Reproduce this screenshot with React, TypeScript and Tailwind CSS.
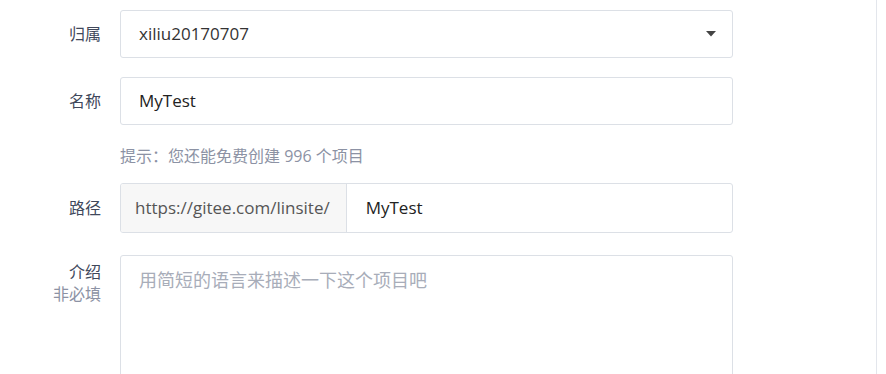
const font = { fontFamily: '"Open Sans", "Noto Sans CJK SC", sans-serif' };

function Label({ children, sub }: { children: string; sub?: string }) {
  return (
    <div className="w-[101px] shrink-0 text-right leading-[22px]">
      <div className="text-[16px] text-[#40485b]">{children}</div>
      {sub && <div className="text-[16px] text-[#8c92a4]">{sub}</div>}
    </div>
  );
}

export default function App() {
  return (
    <div className="h-[374px] w-[886px] overflow-hidden bg-white" style={font}>
      <div className="h-full w-[877px] border-r border-[#e3e6ec] pt-[10px]">
        <div className="flex items-center gap-[19px]">
          <Label>归属</Label>
          <div className="flex h-[48px] w-[613px] items-center justify-between rounded-[3px] border border-[#dce0e6] pl-[18px] pr-[16px]">
            <span className="text-[17px] text-[#333]">xiliu20170707</span>
            <svg width="10" height="6" viewBox="0 0 10 6">
              <path d="M0 0h10L5 5.5z" fill="#444" />
            </svg>
          </div>
        </div>

        <div className="mt-[19px] flex items-center gap-[19px]">
          <Label>名称</Label>
          <div className="flex h-[48px] w-[613px] items-center rounded-[3px] border border-[#dce0e6] pl-[18px]">
            <span className="text-[17px] text-[#222]">MyTest</span>
          </div>
        </div>

        <div className="mt-[20px] pl-[120px] text-[16px] leading-[22px] text-[#8c92a4]">
          提示：您还能免费创建 996 个项目
        </div>

        <div className="mt-[16px] flex items-center gap-[19px]">
          <Label>路径</Label>
          <div className="flex h-[50px] w-[613px] overflow-hidden rounded-[3px] border border-[#dce0e6]">
            <div className="flex items-center border-r border-[#dce0e6] bg-[#f7f7f7] pl-[14px] pr-[16px] text-[17px] text-[#555]">
              https://gitee.com/linsite/
            </div>
            <div className="flex items-center pl-[19px] text-[17px] text-[#222]">MyTest</div>
          </div>
        </div>

        <div className="mt-[22px] flex items-start gap-[19px]">
          <div className="pt-[6px]">
            <Label sub="非必填">介绍</Label>
          </div>
          <div className="h-[140px] w-[613px] rounded-[3px] border border-[#dce0e6] pl-[18px] pt-[11px] text-[18px] leading-[26px] text-[#a8adb9]">
            用简短的语言来描述一下这个项目吧
          </div>
        </div>
      </div>
    </div>
  );
}
